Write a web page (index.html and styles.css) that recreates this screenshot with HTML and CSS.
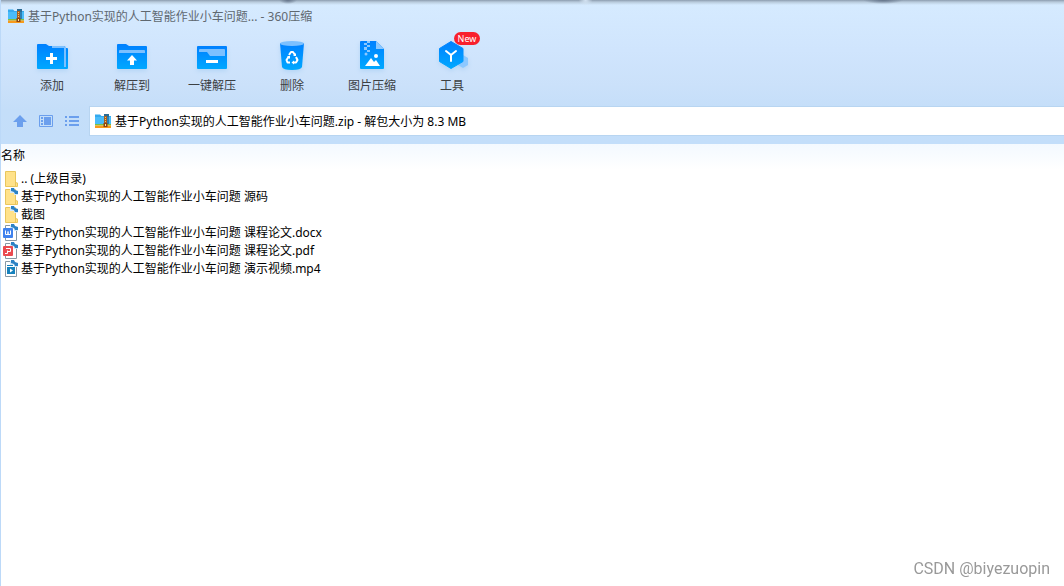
FILE: index.html
```
<!DOCTYPE html>
<html lang="zh-CN">

<head>
	<meta charset="utf-8">
	<title>基于Python实现的人工智能作业小车问题... - 360压缩</title>
	<link rel="stylesheet" href="styles.css">
</head>

<body>
	<svg class="defs" aria-hidden="true">
		<defs>
			<linearGradient id="blue" x1="0" y1="0" x2="0" y2="1">
				<stop offset="0" stop-color="#0080ff" />
				<stop offset="1" stop-color="#00a8ff" />
			</linearGradient>
			<symbol id="archive" viewBox="0 0 16 16">
				<path d="M0 1.500h5l1.500 1.500H16v9H0z" fill="#35a9ee" />
				<path d="M0 4h16v7H0z" fill="#49bcfa" />
				<path d="M0 11h16v1.500H0z" fill="#7cc242" />
				<path d="M0 12.500h16V15H0z" fill="#f79a1c" />
				<path d="M9 1h5v3H9z" fill="#2a6b94" />
				<path d="M12 4h2v7h-2z" fill="#2b7fb4" />
				<path d="M9 3h3v11H9z" fill="#a65f22" />
				<path d="M10 4h1v1h-1zM10 6h1v1h-1zM10 8h1v1h-1z" fill="#f6c463" />
				<path d="M8.500 10h4v4h-4z" fill="#8e4410" />
				<path d="M10 11h1v2h-1z" fill="#ffe7a0" />
			</symbol>
			<symbol id="folder" viewBox="0 0 18 18">
				<path d="M4.500 1.500h10v11l2 .5v3.500h-12z" fill="#ffe28a" stroke="#e9c65c" />
				<path d="M14.500 12v4.500" stroke="#e9c65c" />
			</symbol>
			<symbol id="marks" viewBox="0 0 18 18">
				<path d="M9 1h5v2h3v4h-4V5H9z" fill="#d5eafa" />
				<path d="M10 0h3l1 2 3 1v3h-3l-1-2-3-1z" fill="#2c82c4" />
			</symbol>
			<symbol id="page" viewBox="0 0 18 18">
				<path d="M4.500 1.500h7l4 4v11h-11z" fill="#fff" stroke="#8798a5" />
			</symbol>
		</defs>
	</svg>

	<main>
		<header>
			<div class="titlebar">
				<svg class="small-icon"><use href="#archive" /></svg>
				<h1>基于Python实现的人工智能作业小车问题... - 360压缩</h1>
			</div>

			<div class="toolbar">
				<button type="button">
					<svg viewBox="0 0 40 40">
						<path d="M5 10q0-1 1-1h8l3 2h16v2h2q1 0 1 1v19q0 1-1 1H6q-1 0-1-1z" fill="url(#blue)" />
						<path d="M20 11h12q2 0 2 2v19h-2V13H20z" fill="#7cc0ff" />
						<path d="M18 18h3v4h4v3h-4v4h-3v-4h-4v-3h4z" fill="#fff" />
					</svg>
					<span>添加</span>
				</button>
				<button type="button">
					<svg viewBox="0 0 40 40">
						<path d="M5 10q0-1 1-1h8l3 2h17q1 0 1 1v21q0 1-1 1H6q-1 0-1-1z" fill="url(#blue)" />
						<path d="M7 18v-2q0-1 1-1h24q1 0 1 1v2z" fill="#7cc0ff" />
						<path d="M20 20l5 5.500h-3V30h-4v-4.500h-3z" fill="#fff" />
					</svg>
					<span>解压到</span>
				</button>
				<button type="button">
					<svg viewBox="0 0 40 40">
						<path d="M6 11h28q1 0 1 1v21q0 1-1 1H6q-1 0-1-1V12q0-1 1-1z" fill="url(#blue)" />
						<path d="M7 17v-2q0-1 1-1h24q1 0 1 1v6H18l-3-4z" fill="#7cc0ff" />
						<path d="M14 25h12v3H14z" fill="#fff" />
					</svg>
					<span>一键解压</span>
				</button>
				<button type="button">
					<svg viewBox="0 0 40 40">
						<path d="M8 8h24l-2 24q-1 3-10 3T10 32z" fill="url(#blue)" />
						<ellipse cx="20" cy="8.500" rx="12" ry="2.500" fill="#7cc0ff" />
						<g fill="none" stroke="#fff" stroke-width="2" stroke-linejoin="round">
							<path d="M17 20l2-3h2l2 3" />
							<path d="M24 22l1.500 3-1.500 2.500H21" />
							<path d="M18 27.500h-2.500L14.500 25l2-3" />
						</g>
						<path d="M24 18v3h-3zM22 25.500v4l-2.500-2zM15 21h3v3z" fill="#fff" />
					</svg>
					<span>删除</span>
				</button>
				<button type="button">
					<svg viewBox="0 0 40 40">
						<path d="M9 6h15l8 8v19q0 1-1 1H9q-1 0-1-1V7q0-1 1-1z" fill="url(#blue)" />
						<path d="M24 6l8 8h-8z" fill="#8cc8ff" />
						<path d="M15 6h3v2h-3zM12 8h3v2h-3zM15 10h3v2h-3zM12 12h3v3h-3zM15 15h3v2h-3z" fill="#8cc8ff" />
						<circle cx="14" cy="19" r="1.500" fill="#8cc8ff" />
						<path d="M13 31l6-8 3 4 2-2 4 6z" fill="#fff" />
						<circle cx="24" cy="21" r="2" fill="#fff" />
					</svg>
					<span>图片压缩</span>
				</button>
				<button type="button">
					<svg viewBox="0 0 40 40">
						<path d="M31 20l5 3v7l-5 3-5-3v-7z" fill="#8cc8ff" />
						<path d="M19 6.500l12 7v13l-12 7-11.500-7v-13z" fill="url(#blue)" stroke="url(#blue)" stroke-linejoin="round" />
						<path d="M14 16l5 4 5-4M19 20v6" fill="none" stroke="#fff" stroke-width="2" stroke-linecap="round" />
					</svg>
					<span>工具</span>
					<em class="badge">New</em>
				</button>
			</div>

			<div class="pathbar">
				<button type="button" aria-label="向上">
					<svg viewBox="0 0 16 16"><path d="M8 2l7 7h-4v5H5V9H1z" fill="#6b9fed" /></svg>
				</button>
				<button type="button" aria-label="视图">
					<svg viewBox="0 0 16 16">
						<path d="M1.500 2.500h13v11h-13z" fill="none" stroke="#6b9fed" />
						<path d="M3 4h2v2H3zM3 7h2v2H3zM3 10h2v2H3zM6 4h7v8H6z" fill="#6b9fed" />
					</svg>
				</button>
				<button type="button" aria-label="列表">
					<svg viewBox="0 0 16 16">
						<path d="M1 3h2v2H1zM5 3h10v2H5zM1 7h2v2H1zM5 7h10v2H5zM1 11h2v2H1zM5 11h10v2H5z" fill="#6b9fed" />
					</svg>
				</button>
				<div class="address">
					<svg class="small-icon"><use href="#archive" /></svg>
					<input type="text" aria-label="路径" value="基于Python实现的人工智能作业小车问题.zip - 解包大小为 8.3 MB">
				</div>
			</div>
		</header>

		<table>
			<thead>
				<tr><th>名称</th></tr>
			</thead>
			<tbody>
				<tr>
					<td><svg><use href="#folder" /></svg>.. (上级目录)</td>
				</tr>
				<tr>
					<td><svg><use href="#folder" /><use href="#marks" /></svg>基于Python实现的人工智能作业小车问题 源码</td>
				</tr>
				<tr>
					<td><svg><use href="#folder" /><use href="#marks" /></svg>截图</td>
				</tr>
				<tr>
					<td>
						<svg viewBox="0 0 18 18">
							<use href="#page" /><use href="#marks" />
							<rect x="2" y="4" width="10" height="10" rx="1" fill="#3f82ee" />
							<path d="M4.500 6.500v4h2.500v-3v3h2.500v-4" fill="none" stroke="#fff" />
						</svg>基于Python实现的人工智能作业小车问题 课程论文.docx
					</td>
				</tr>
				<tr>
					<td>
						<svg viewBox="0 0 18 18">
							<use href="#page" /><use href="#marks" />
							<rect x="2" y="4" width="10" height="10" rx="1" fill="#ea4a50" />
							<path d="M5 6.500h4.500v3H6M6.500 8.500v3H4" fill="none" stroke="#fff" />
						</svg>基于Python实现的人工智能作业小车问题 课程论文.pdf
					</td>
				</tr>
				<tr>
					<td>
						<svg viewBox="0 0 18 18">
							<use href="#page" /><use href="#marks" />
							<path d="M6 7h8v7H6z" fill="#1682bd" />
							<path d="M6 5h6v1H6z" fill="#1682bd" />
							<path d="M9 8.500l3 2-3 2z" fill="#fff" />
						</svg>基于Python实现的人工智能作业小车问题 演示视频.mp4
					</td>
				</tr>
			</tbody>
		</table>
	</main>

	<div class="watermark">CSDN @biyezuopin</div>
</body>

</html>
```
FILE: styles.css
```
* {
	box-sizing: border-box;
}

body {
	margin: 0;
	background-color: white;
	color: black;
	font-family: "Noto Sans", "Noto Sans CJK SC", sans-serif;
	font-size: 12px;
	line-height: 18px;
}

main {
	min-height: 100vh;
	border-left: 1px solid #bcd9f8;
}

header {
	background:
		radial-gradient(9px 4px at 27% 0, #64748a, transparent),
		radial-gradient(20px 4px at 83% 0, #64748a, transparent),
		radial-gradient(7px 6px at 55% 0, #d6e6f5, transparent),
		linear-gradient(#8b9cae, #b8cadb 2px, transparent 5px),
		linear-gradient(#d6ebff, #d0e5fd 50px, #cbe1fa 85px, #c4def9 110px, #c3defa);
}

svg {
	display: block;
	flex: none;
}

.defs {
	position: absolute;
	width: 0;
	height: 0;
}

.small-icon {
	width: 16px;
	height: 16px;
}

.titlebar {
	display: flex;
	align-items: center;
	gap: 4px;
	height: 32px;
	padding-left: 7px;
}

h1 {
	margin: 0;
	padding-top: 2px;
	color: #5f6870;
	font-size: 12px;
	font-weight: normal;
}

button {
	padding: 0;
	border: none;
	background: none;
	color: #3c4043;
	font: inherit;
}

.toolbar {
	display: flex;
	height: 74px;
	padding: 3px 0 0 11px;
}

.toolbar button {
	position: relative;
	display: flex;
	flex-direction: column;
	align-items: center;
	gap: 2px;
	width: 80px;
}

.toolbar svg {
	width: 40px;
	height: 40px;
	filter: drop-shadow(0 2px 2px #b4d5f5);
}

.badge {
	position: absolute;
	top: -3px;
	right: 12px;
	width: 26px;
	border-radius: 7px;
	background-color: #f8202d;
	color: white;
	font-size: 9px;
	font-style: normal;
	line-height: 13px;
	text-align: center;
}

.pathbar {
	display: flex;
	align-items: center;
	gap: 8px;
	padding: 0 0 8px 10px;
}

.pathbar button {
	width: 18px;
	padding: 0 1px;
}

.pathbar svg {
	width: 16px;
	height: 16px;
}

.address {
	display: flex;
	flex: 1;
	align-items: center;
	gap: 4px;
	height: 30px;
	padding-left: 5px;
	border: 1px solid #b8d5f1;
	border-right: none;
	background-color: white;
}

.address input {
	flex: 1;
	padding: 2px 0 0;
	border: none;
	outline: none;
	background: none;
	color: black;
	font: inherit;
}

table {
	width: 100%;
	border-collapse: collapse;
}

thead {
	background: linear-gradient(#f3f9ff, white);
}

th {
	height: 26px;
	padding: 0 0 2px;
	font-weight: normal;
	text-align: left;
}

td {
	display: flex;
	align-items: center;
	gap: 2px;
	height: 18px;
	padding: 0;
	white-space: nowrap;
}

td svg {
	width: 18px;
	height: 18px;
}

.watermark {
	position: fixed;
	right: 14px;
	bottom: 7px;
	color: #999;
	font-family: Roboto, sans-serif;
	font-size: 16px;
	line-height: 20px;
}
```
